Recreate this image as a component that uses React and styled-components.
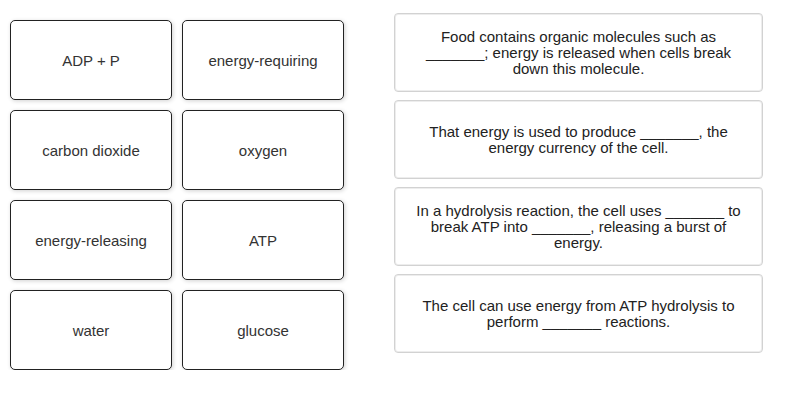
import React from 'react';
import styled, { createGlobalStyle } from 'styled-components';

const GlobalStyle = createGlobalStyle`
  body {
    margin: 0;
    background: #fff;
    font-family: 'Liberation Sans', Arial, Helvetica, sans-serif;
    color: #333;
  }
`;

const Page = styled.div`
  display: flex;
  align-items: flex-start;
  gap: 50px;
  padding: 13px 0 0 10px;
`;

const TileGrid = styled.div`
  display: grid;
  grid-template-columns: repeat(2, 162px);
  grid-auto-rows: 80px;
  column-gap: 10px;
  row-gap: 10px;
  padding-top: 7px;
`;

const Tile = styled.div`
  box-sizing: border-box;
  display: flex;
  align-items: center;
  justify-content: center;
  border: 1px solid #222;
  border-radius: 5px;
  background: #fff;
  box-shadow: 1px 1px 4px rgba(0, 0, 0, 0.18);
  font-size: 15px;
  color: #333;
`;

const Targets = styled.div`
  display: flex;
  flex-direction: column;
  gap: 8px;
`;

const Target = styled.div`
  box-sizing: border-box;
  width: 369px;
  height: 79px;
  display: flex;
  align-items: center;
  justify-content: center;
  padding: 0 18px;
  border: 1px solid #d2d2d2;
  border-radius: 4px;
  box-shadow: inset 0 0 0 1px #ededed;
  background: #fff;
  text-align: center;
  font-size: 15px;
  line-height: 16px;
  color: #222;
`;

const terms = [
  'ADP + P',
  'energy-requiring',
  'carbon dioxide',
  'oxygen',
  'energy-releasing',
  'ATP',
  'water',
  'glucose',
];

const statements = [
  'Food contains organic molecules such as _______; energy is released when cells break down this molecule.',
  'That energy is used to produce _______, the energy currency of the cell.',
  'In a hydrolysis reaction, the cell uses _______ to break ATP into _______, releasing a burst of energy.',
  'The cell can use energy from ATP hydrolysis to perform _______ reactions.',
];

const App = () => {
  return (
    <>
      <GlobalStyle />
      <Page>
        <TileGrid>
          {terms.map((t) => (
            <Tile key={t}>{t}</Tile>
          ))}
        </TileGrid>
        <Targets>
          {statements.map((s) => (
            <Target key={s}>{s}</Target>
          ))}
        </Targets>
      </Page>
    </>
  );
};

export default App;
